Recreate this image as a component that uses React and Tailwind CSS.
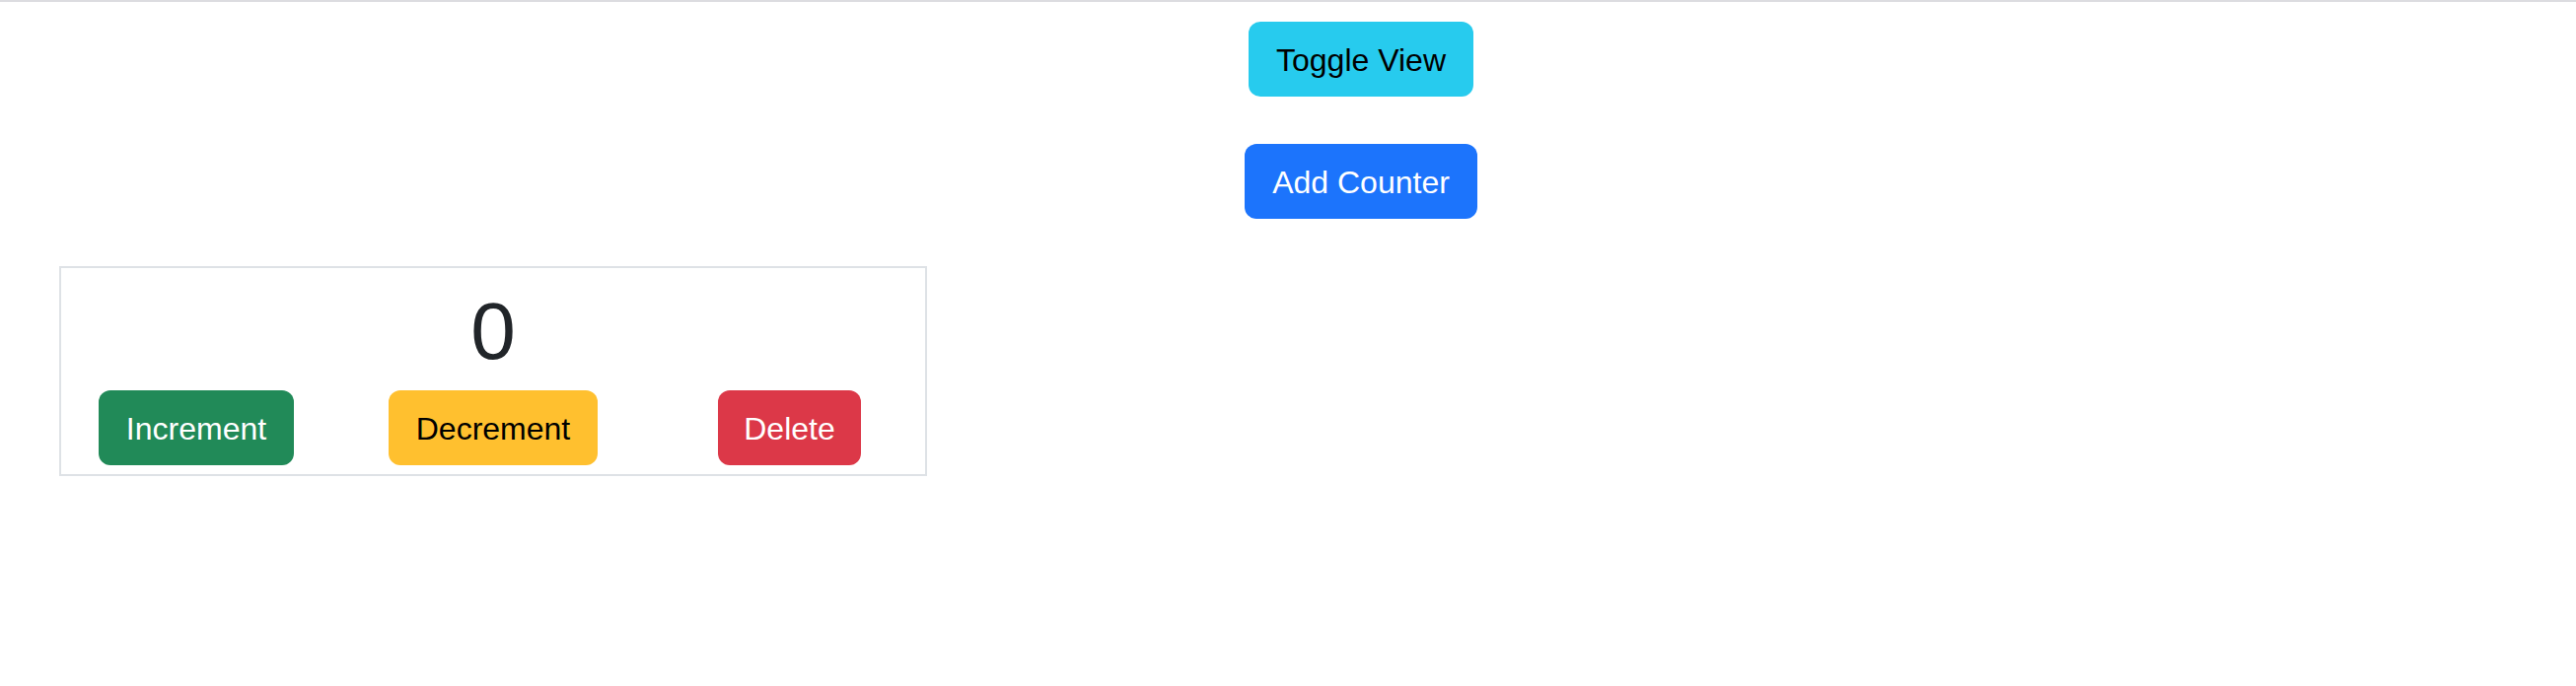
export default function App() {
  return (
    <div
      className="min-h-[696px] bg-white border-t-2 border-[#dcdce0]"
      style={{ fontFamily: '"Liberation Sans", Arial, sans-serif' }}
    >
      {/* Top controls */}
      <div className="flex flex-col items-center pl-[148px] pt-[20px] gap-[48px]">
        <button className="h-[76px] w-[228px] rounded-[12px] bg-[#27cbee] pt-[2px] text-[32px] text-black">
          Toggle View
        </button>
        <button className="h-[76px] w-[236px] rounded-[12px] bg-[#1c74fc] pt-[2px] text-[32px] text-white">
          Add Counter
        </button>
      </div>

      {/* Counter card */}
      <div className="mt-[48px] ml-[60px] w-[880px] h-[213px] border-2 border-[#dee2e6] flex flex-col">
        <h1 className="mt-[16px] text-center text-[82px] leading-[96px] text-[#212529]">0</h1>
        <div className="mt-[12px] flex">
          <button className="ml-[38px] h-[76px] w-[198px] rounded-[12px] bg-[#218a58] pt-[2px] text-[32px] text-white">
            Increment
          </button>
          <button className="ml-[96px] h-[76px] w-[212px] rounded-[12px] bg-[#ffc02f] pt-[2px] text-[32px] text-black">
            Decrement
          </button>
          <button className="ml-[122px] h-[76px] w-[145px] rounded-[12px] bg-[#dc3848] pt-[2px] text-[32px] text-white">
            Delete
          </button>
        </div>
      </div>
    </div>
  )
}
